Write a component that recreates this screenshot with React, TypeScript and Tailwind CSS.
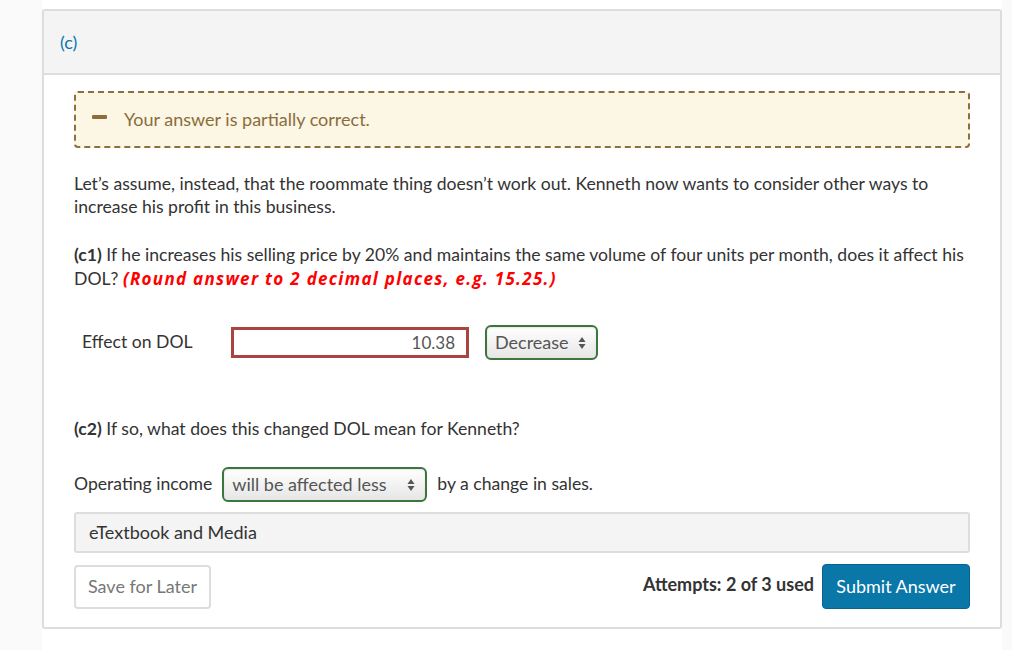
import React from 'react';

const font = { fontFamily: 'Lato, "Noto Sans", sans-serif' };

function Arrows() {
  return (
    <svg width="8" height="14" viewBox="0 0 8 14" className="shrink-0">
      <path d="M4 1 L7.5 6 H0.5 Z" fill="#555" />
      <path d="M4 13 L7.5 8 H0.5 Z" fill="#555" />
    </svg>
  );
}

function Select({ value, width }: { value: string; width: string }) {
  return (
    <div
      className={`${width} h-[35px] flex items-center justify-between pl-[8px] pr-[10px] rounded-[6px] border-2 border-[#3c763d] bg-gradient-to-b from-white to-[#e6e6e6] text-[#555] text-[18px] shadow-[inset_0_1px_2px_rgba(0,0,0,0.1)]`}
    >
      <span>{value}</span>
      <Arrows />
    </div>
  );
}

export default function App() {
  return (
    <div className="flex min-h-[650px] bg-white text-[#333]" style={font}>
      <div className="w-[42px] bg-[#fafafa]" />
      <div className="w-[960px] pt-[9px]">
        <div className="border-2 border-[#dddddd] rounded-[3px]">
          <div className="h-[64px] bg-[#f4f4f4] border-b-2 border-[#dddddd] flex items-center pl-[16px] text-[18px] text-[#0a78aa]">
            (c)
          </div>
          <div className="px-[30px] pt-[16px] pb-[18px]">
            <div className="h-[57px] border-2 border-dashed border-[#8c6f3e] rounded-[4px] bg-[#fcf6e4] flex items-center pl-[16px] text-[18px] text-[#8a6d3b]">
              <span className="w-[15px] h-[4px] rounded-[1px] bg-[#8c6d3b] mr-[17px] -mt-[6px]" />
              <span>Your answer is partially correct.</span>
            </div>

            <p className="mt-[24px] text-[17.6px] leading-[23px]">
              Let’s assume, instead, that the roommate thing doesn’t work out. Kenneth now wants to consider other ways to increase his profit in this business.
            </p>

            <p className="mt-[25px] text-[17.6px] leading-[24px]">
              <b>(c1)</b> If he increases his selling price by 20% and maintains the same volume of four units per month, does it affect his DOL?{' '}
              <span
                className="text-[#ff0000] font-bold italic text-[17px] leading-[24px] tracking-[1.3px]"
                style={{ fontFamily: '"Open Sans", sans-serif' }}
              >
                (Round answer to 2 decimal places, e.g. 15.25.)
              </span>
            </p>

            <div className="mt-[34px] flex items-center">
              <span className="w-[157px] pl-[8px] text-[17.6px]">Effect on DOL</span>
              <div className="w-[238px] h-[31px] border-[3px] border-[#a94442] flex items-center justify-end pr-[11px] text-[17px] text-[#555]">
                10.38
              </div>
              <div className="ml-[16px]">
                <Select value="Decrease" width="w-[113px]" />
              </div>
            </div>

            <p className="mt-[57px] text-[17.6px] leading-[24px]">
              <b>(c2)</b> If so, what does this changed DOL mean for Kenneth?
            </p>

            <div className="mt-[26px] flex items-center text-[17.6px]">
              <span className="mr-[10px]">Operating income</span>
              <Select value="will be affected less" width="w-[205px]" />
              <span className="ml-[10px]">by a change in sales.</span>
            </div>

            <div className="mt-[10px] h-[41px] bg-[#f4f4f4] border-2 border-[#dddddd] rounded-[3px] flex items-center pl-[13px] text-[18px]">
              eTextbook and Media
            </div>

            <div className="mt-[11px] flex items-center">
              <button className="w-[137px] h-[44px] border-2 border-[#dddddd] rounded-[4px] bg-white text-[#777] text-[18px]">
                Save for Later
              </button>
              <div className="flex-1" />
              <span className="font-bold text-[18px] text-[#333] mr-[8px] -mt-[4px]">Attempts: 2 of 3 used</span>
              <button className="w-[148px] h-[45px] rounded-[4px] bg-[#0a77a9] border border-[#07648f] text-white text-[18px]">
                Submit Answer
              </button>
            </div>
          </div>
        </div>
      </div>
      <div className="flex-1 bg-[#fafafa]" />
    </div>
  );
}
